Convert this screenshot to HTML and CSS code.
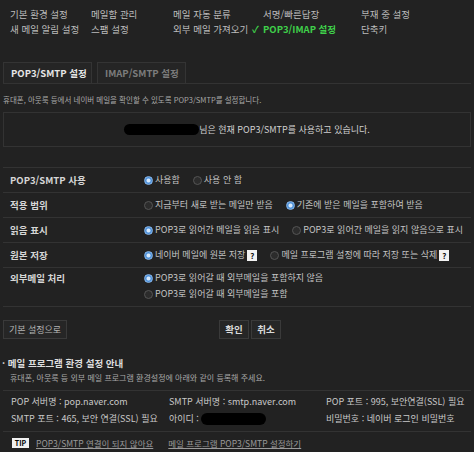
FILE: index.html
```html
<!doctype html>
<html lang="ko">
<head>
<meta charset="utf-8">
<title>POP3/IMAP 설정</title>
<link rel="stylesheet" href="styles.css">
</head>
<body>
<div class="wrap">

  <!-- 환경설정 메뉴 -->
  <ul class="menu">
    <li>기본 환경 설정</li>
    <li>메일함 관리</li>
    <li>메일 자동 분류</li>
    <li>서명/빠른답장</li>
    <li>부재 중 설정</li>
    <li>새 메일 알림 설정</li>
    <li>스팸 설정</li>
    <li>외부 메일 가져오기</li>
    <li class="on"><span class="chk">&#10003;</span>POP3/IMAP 설정</li>
    <li>단축키</li>
  </ul>

  <div class="tabs">
    <a class="tab on">POP3/SMTP 설정</a>
    <a class="tab">IMAP/SMTP 설정</a>
  </div>

  <p class="desc">휴대폰, 아웃룩 등에서 네이버 메일을 확인할 수 있도록 POP3/SMTP를 설정합니다.</p>

  <div class="status"><span class="mask"></span>님은 현재 POP3/SMTP를 사용하고 있습니다.</div>

  <!-- 설정 항목 -->
  <div class="opts">
    <div class="opt">
      <div class="th">POP3/SMTP 사용</div>
      <div class="td">
        <label><input type="radio" name="use" checked>사용함</label>
        <label><input type="radio" name="use">사용 안 함</label>
      </div>
    </div>
    <div class="opt">
      <div class="th">적용 범위</div>
      <div class="td">
        <label><input type="radio" name="range">지금부터 새로 받는 메일만 받음</label>
        <label><input type="radio" name="range" checked>기존에 받은 메일을 포함하여 받음</label>
      </div>
    </div>
    <div class="opt">
      <div class="th">읽음 표시</div>
      <div class="td">
        <label><input type="radio" name="read" checked>POP3로 읽어간 메일을 읽음 표시</label>
        <label><input type="radio" name="read">POP3로 읽어간 메일을 읽지 않음으로 표시</label>
      </div>
    </div>
    <div class="opt">
      <div class="th">원본 저장</div>
      <div class="td">
        <label><input type="radio" name="keep" checked>네이버 메일에 원본 저장<span class="help">?</span></label>
        <label><input type="radio" name="keep">메일 프로그램 설정에 따라 저장 또는 삭제<span class="help">?</span></label>
      </div>
    </div>
    <div class="opt multi">
      <div class="th">외부메일 처리</div>
      <div class="td col">
        <label><input type="radio" name="ext" checked>POP3로 읽어갈 때 외부메일을 포함하지 않음</label>
        <label><input type="radio" name="ext">POP3로 읽어갈 때 외부메일을 포함</label>
      </div>
    </div>
  </div>

  <div class="btns">
    <button class="btn reset">기본 설정으로</button>
    <div class="pair">
      <button class="btn strong">확인</button>
      <button class="btn strong">취소</button>
    </div>
  </div>

  <!-- 메일 프로그램 안내 -->
  <h3 class="guide">· 메일 프로그램 환경 설정 안내</h3>
  <p class="guide-sub">휴대폰, 아웃룩 등 외부 메일 프로그램 환경설정에 아래와 같이 등록해 주세요.</p>

  <div class="info">
    <span>POP 서버명 : pop.naver.com</span>
    <span>SMTP 서버명 : smtp.naver.com</span>
    <span>POP 포트 : 995, 보안연결(SSL) 필요</span>
    <span>SMTP 포트 : 465, 보안 연결(SSL) 필요</span>
    <span class="id">아이디 : <span class="mask"></span></span>
    <span>비밀번호 : 네이버 로그인 비밀번호</span>
  </div>

  <div class="tip">
    <span class="badge">TIP</span>
    <a href="#">POP3/SMTP 연결이 되지 않아요</a>
    <a href="#">메일 프로그램 POP3/SMTP 설정하기</a>
  </div>

</div>
</body>
</html>
```

FILE: styles.css
```css
* { box-sizing: border-box; }
html, body { margin:0; padding:0; background:#222; }

body {
  font-family: "Noto Sans CJK KR", sans-serif;
  font-size: 9px;
  color: #c4c4c4;
}

.wrap { padding: 0 3px; }

/* top menu */
.menu {
  list-style: none;
  margin: 0;
  padding: 7px 0 0 7px;
  display: grid;
  grid-template-columns: 81px 82px 90px 98px 1fr;
  grid-auto-rows: 15px;
  font-size: 9.5px;
  line-height: 15px;
  color: #bcbcbc;
  white-space: nowrap;
}
.menu .on { color: #3fcf4a; font-weight: bold; }
.menu .chk { display:inline-block; width:11px; margin-left:-11px; }

/* tabs */
.tabs {
  display: flex;
  gap: 5px;
  margin-top: 25px;
  border-bottom: 1px solid #333;
}
.tab {
  width: 89px;
  height: 21px;
  padding-left: 7px;
  border: 1px solid #343434;
  border-bottom: 0;
  background: #252525;
  font-size: 9.5px;
  font-weight: bold;
  line-height: 20px;
  color: #7c7c7c;
}
.tab.on { color: #e6e6e6; }

.desc {
  margin: 10px 0 0;
  font-size: 7.5px;
  line-height: 12px;
  color: #a8a8a8;
}

.status {
  margin-top: 6px;
  height: 35px;
  padding-left: 20px;
  border: 1px solid #333;
  display: flex;
  align-items: center;
  justify-content: center;
  font-size: 9px;
  color: #d0d0d0;
}
.mask {
  display: inline-block;
  width: 75px;
  height: 11px;
  border-radius: 6px;
  background: #000;
}

/* option rows */
.opts { margin-top: 20px; border-bottom: 1px solid #333; }
.opt {
  display: grid;
  grid-template-columns: 141px 1fr;
  align-items: center;
  min-height: 25px;
  border-top: 1px solid #333;
}
.opt.multi { align-items: start; padding: 2px 0 4px; }
.th {
  padding-left: 7px;
  font-size: 9.5px;
  font-weight: bold;
  line-height: 16px;
  color: #d6d6d6;
}
.td { display: flex; flex-wrap: nowrap; gap: 13px; white-space: nowrap; }
.td.col { flex-direction: column; gap: 0; }
.td label { display: inline-flex; align-items: center; line-height: 16px; }

.td input {
  appearance: none;
  -webkit-appearance: none;
  width: 9px;
  height: 9px;
  margin: 0 2px 0 0;
  border-radius: 50%;
  border: 1px solid #555;
  background: #2c2c2c;
}
.td input:checked {
  border-color: #8ab8ea;
  background: radial-gradient(circle, #d8eafc 0 1.5px, #4b8fd8 2.5px);
}

.help {
  display: inline-block;
  width: 10px;
  height: 11px;
  margin-left: 2px;
  background: #f2f2f2;
  color: #111;
  font-size: 8px;
  font-weight: bold;
  line-height: 11px;
  text-align: center;
}

/* buttons */
.btns { display: flex; margin-top: 13px; }
.pair { display: flex; gap: 2px; margin-left: 152px; }
.btn {
  width: 30px;
  height: 19px;
  padding: 0;
  border: 1px solid #3a3a3a;
  background: #262626;
  font-family: inherit;
  font-size: 9.5px;
  line-height: 17px;
  text-align: center;
  color: #b4b4b4;
}
.btn.reset { width: 64px; font-size: 9px; }
.btn.strong { font-weight: bold; color: #dadada; }

/* guide */
.guide {
  margin: 17px 0 0 -1px;
  font-size: 9.5px;
  line-height: 14px;
  color: #dedede;
}
.guide-sub {
  margin: 1px 0 0;
  padding-left: 7px;
  font-size: 8px;
  line-height: 13px;
  color: #a8a8a8;
}

.info {
  display: grid;
  grid-template-columns: 158px 157px 1fr;
  grid-auto-rows: 17px;
  align-items: center;
  margin-top: 6px;
  padding: 2px 0 4px 8px;
  border-top: 1px solid #333;
  border-bottom: 1px solid #333;
  white-space: nowrap;
  color: #c8c8c8;
}
.info .id { display: flex; align-items: center; gap: 2px; }
.info .id .mask { width: 65px; height: 12px; }

.tip {
  display: flex;
  align-items: center;
  padding: 4px 0 0 9px;
  line-height: 14px;
}
.badge {
  width: 17px;
  height: 10px;
  margin-right: 7px;
  background: #f0f0f0;
  color: #000;
  font-size: 7px;
  font-weight: bold;
  line-height: 10px;
  text-align: center;
}
.tip a { color: #9a9a9a; font-size: 8.5px; text-decoration: underline; }
.tip a + a { margin-left: 15px; }
```
